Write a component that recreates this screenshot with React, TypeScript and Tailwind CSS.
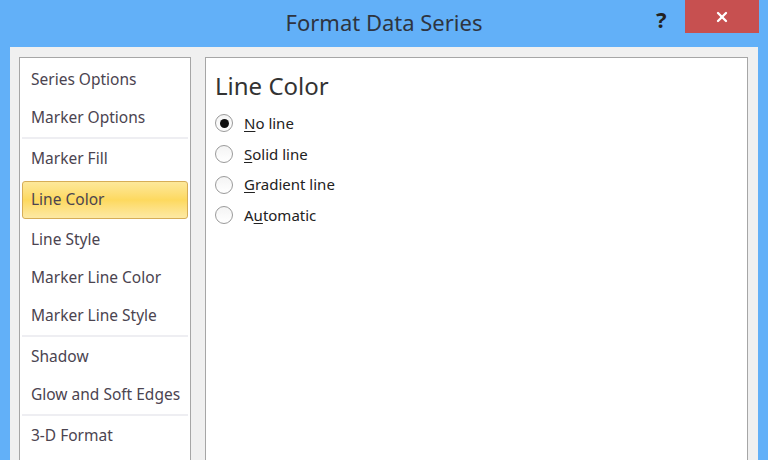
import { X } from "lucide-react";

/* -------------------------------------------------------
   DATA
---------------------------------------------------------*/
const GROUPS = [
  ["Series Options", "Marker Options"],
  ["Marker Fill", "Line Color", "Line Style", "Marker Line Color", "Marker Line Style"],
  ["Shadow", "Glow and Soft Edges"],
  ["3-D Format"],
];

const OPTIONS = [
  { key: "N", rest: "o line", pre: "", checked: true },
  { key: "S", rest: "olid line", pre: "", checked: false },
  { key: "G", rest: "radient line", pre: "", checked: false },
  { key: "u", rest: "tomatic", pre: "A", checked: false },
];

const SELECTED = "Line Color";

/* -------------------------------------------------------
   COMPONENT
---------------------------------------------------------*/
export default function App() {
  return (
    <div
      className="w-[768px] h-[460px] overflow-hidden bg-[#62b0f8] flex flex-col"
      style={{ fontFamily: '"Noto Sans", "Open Sans", sans-serif' }}
    >
      {/* TITLE BAR */}
      <div className="h-[47px] flex items-start relative shrink-0">
        <div className="flex-1 text-center text-[22px] text-[#2e3440] pt-[6px]">
          Format Data Series
        </div>
        <div className="absolute left-[656px] top-[3px] text-[22px] font-bold text-[#222]">?</div>
        <div className="absolute left-[685px] top-0 w-[74px] h-[33px] bg-[#c75050] flex items-center justify-center">
          <X size={16} strokeWidth={3.5} className="text-white" />
        </div>
      </div>

      {/* BODY */}
      <div className="flex-1 mx-[10px] bg-[#f0f0f0] pt-[10px] pl-[9px] pr-[10px] flex gap-[14px]">
        {/* LEFT LIST */}
        <div className="w-[172px] bg-white border border-[#a6a6a6] border-b-0 pt-[3px] px-[2px]">
          {GROUPS.map((g, gi) => (
            <div key={gi} className={gi > 0 ? "border-t-2 border-[#eeeef2] pt-px" : ""}>
              {g.map((item) =>
                item === SELECTED ? (
                  <div
                    key={item}
                    className="h-[38px] mt-[3px] mb-[2px] flex items-center pl-[8px] text-[15.5px] text-[#4b4450] rounded-[3px] border border-[#d6ad57] bg-gradient-to-b from-[#fde89a] via-[#fdd95e] to-[#fde9a3]"
                  >
                    {item}
                  </div>
                ) : (
                  <div key={item} className="h-[38px] flex items-center pl-[9px] text-[15.5px] text-[#4b4450]">
                    {item}
                  </div>
                )
              )}
            </div>
          ))}
        </div>

        {/* RIGHT PANEL */}
        <div className="flex-1 bg-white border border-[#a6a6a6] border-b-0 pt-[10px] pl-[9px]">
          <h1 className="text-[24px] text-[#333] leading-[36px] mb-[4px]">Line Color</h1>
          <div className="flex flex-col">
            {OPTIONS.map((o) => (
              <div key={o.key} className="h-[30.7px] flex items-center gap-[11px]">
                <span className="w-[18px] h-[18px] rounded-full border-[1.5px] border-[#9a9a9a] bg-gradient-to-b from-[#f4f4f4] to-white flex items-center justify-center">
                  {o.checked && <span className="w-[9px] h-[9px] rounded-full bg-[#111]" />}
                </span>
                <span className="text-[15px] text-[#222]">
                  {o.pre}
                  <span className="underline underline-offset-2">{o.key}</span>
                  {o.rest}
                </span>
              </div>
            ))}
          </div>
        </div>
      </div>
    </div>
  );
}
